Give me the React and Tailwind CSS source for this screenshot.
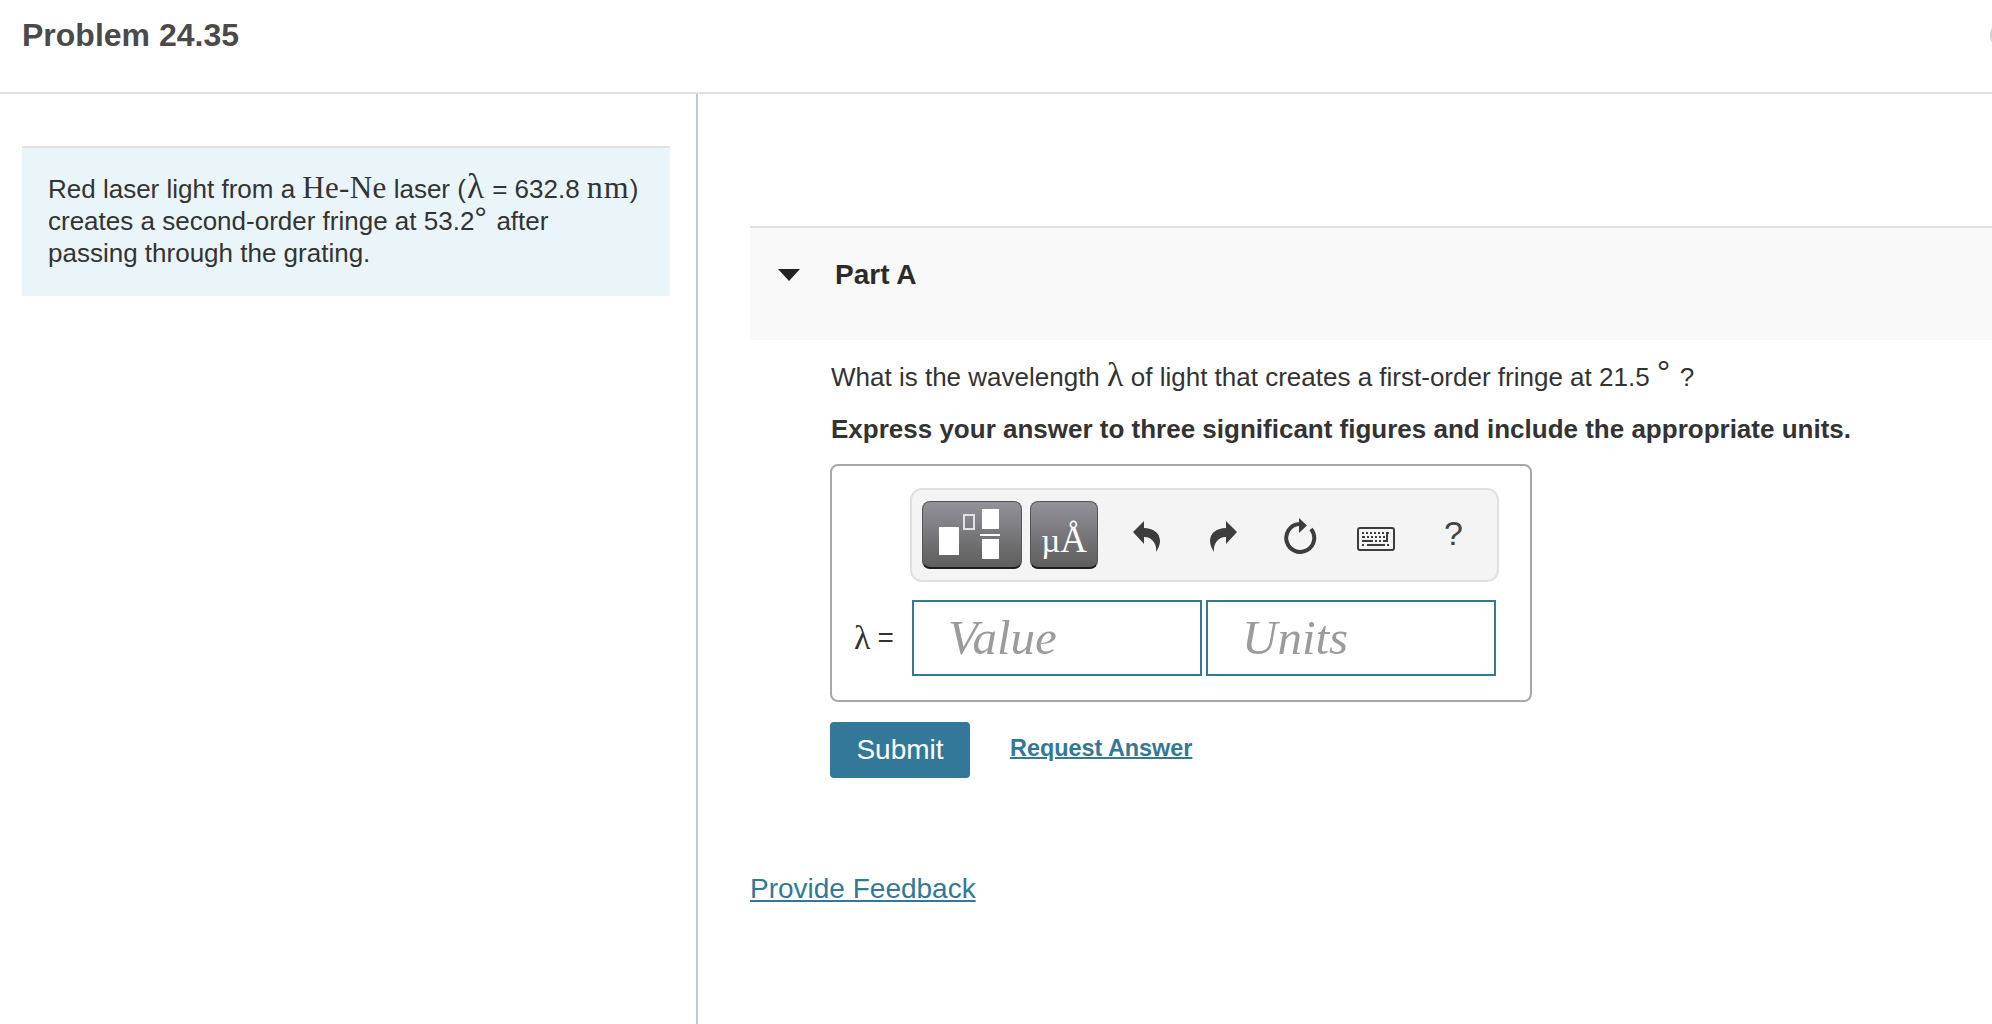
import React from 'react';

const SANS = "font-['Liberation_Sans',Arial,sans-serif]";
const MATH = "font-['Liberation_Serif','Times_New_Roman',serif]";

const ArrowIcon = ({ flip }) => (
  <svg width="27" height="31" viewBox="0 0 27 31" className={flip ? '-scale-x-100' : ''}>
    <path d="M0 11 L11 0 V7 C20 7 27 12 27 20 C27 24 25 28 23 31 C24 24 20 16 11 16 V23 Z" fill="#3d3d3d" />
  </svg>
);

const ReloadIcon = () => (
  <svg width="33" height="36" viewBox="0 0 33 36">
    <path d="M15 6 A14 14 0 1 0 27 11" fill="none" stroke="#3d3d3d" strokeWidth="4" />
    <path d="M15 0 L23 7.5 L15 15 Z" fill="#3d3d3d" />
  </svg>
);

const KeyboardIcon = () => (
  <svg width="38" height="24" viewBox="0 0 38 24">
    <rect x="1" y="1" width="36" height="22" rx="2" fill="none" stroke="#3d3d3d" strokeWidth="2" />
    <path d="M5 6h2M9 6h2M13 6h2M17 6h2M21 6h2M25 6h2M29 6h3M5 10h3M10 10h2M14 10h2M18 10h2M22 10h2M26 10h2M30 6v8M5 14h11M18 14h2M22 14h2M26 14h5M5 18h2M10 18h18M30 18h2" stroke="#3d3d3d" strokeWidth="2" fill="none" />
  </svg>
);

const TemplateIcon = () => (
  <svg width="96" height="66" viewBox="0 0 96 66">
    <rect x="15" y="25" width="20" height="28" fill="#fff" />
    <rect x="40" y="13" width="10" height="14" fill="none" stroke="#e2e2e2" strokeWidth="2" />
    <rect x="58" y="7" width="17" height="20" fill="#fff" />
    <rect x="56" y="32" width="20" height="2" fill="#fff" />
    <rect x="58" y="37" width="17" height="20" fill="#fff" />
  </svg>
);

const Toolbar = () => (
  <div className="ml-[78px] mt-[22px] w-[589px] h-[94px] rounded-xl border-2 border-[#e0e0e0] bg-[#f4f4f4] flex items-center pl-[10px]">
    <button className="w-[100px] h-[68px] rounded-lg border border-[#555] border-b-2 border-b-[#1c1c1c] bg-gradient-to-b from-[#92929a] to-[#5e5e5e] flex items-center justify-center">
      <TemplateIcon />
    </button>
    <button className={`ml-2 w-[68px] h-[68px] rounded-lg border border-[#555] border-b-2 border-b-[#1c1c1c] bg-gradient-to-b from-[#92929a] to-[#5e5e5e] text-white text-[37px] leading-none pt-[9px] ${MATH}`}>
      <span className="text-[33px]">µ</span>Å
    </button>
    <div className="ml-[35px] mt-[2px]"><ArrowIcon /></div>
    <div className="ml-[50px] mt-[2px]"><ArrowIcon flip /></div>
    <div className="ml-[47px] mt-[2px]"><ReloadIcon /></div>
    <div className="ml-[40px] mt-[8px]"><KeyboardIcon /></div>
    <div className="ml-[49px] text-[34px] leading-none text-[#444] -mt-[5px]">?</div>
  </div>
);

const AnswerBox = () => (
  <div className="ml-[80px] w-[702px] h-[238px] rounded-lg border-2 border-[#a8a8a8]">
    <Toolbar />
    <div className="mt-[18px] flex items-center h-[76px]">
      <div className="w-[80px] pl-[22px] flex items-center gap-[7px] text-[#333] whitespace-nowrap">
        <span className={`${MATH} text-[34px] leading-none`}>λ</span>
        <span className="text-[28px] leading-none">=</span>
      </div>
      <div className={`w-[290px] h-[76px] border-2 border-[#337995] pl-[34px] flex items-center text-[#9b9b9b] italic text-[49px] ${MATH}`}>Value</div>
      <div className={`ml-1 w-[290px] h-[76px] border-2 border-[#337995] pl-[34px] flex items-center text-[#9b9b9b] italic text-[49px] ${MATH}`}>Units</div>
    </div>
  </div>
);

export default function App() {
  return (
    <div className={`h-screen w-full overflow-hidden bg-white flex flex-col text-[#333] ${SANS}`}>
      <header className="h-[94px] shrink-0 border-b-2 border-[#e0e0e0] flex items-center justify-between pl-[22px] pb-[22px]">
        <h1 className="text-[32px] font-bold leading-none text-[#4a4a4a]">Problem 24.35</h1>
        <div className="w-[30px] h-[30px] -mr-[28px] rounded-full border-2 border-[#cfcfcf]" />
      </header>

      <div className="flex flex-1">
        <aside className="w-[698px] shrink-0 border-r-2 border-[#b9c9de] pl-[22px] pr-[26px] pt-[52px]">
          <div className="h-[150px] border-t-2 border-[#e0e0e0] bg-[#e9f5f8] pl-[26px] pt-[25px] text-[26px] leading-[32px] whitespace-nowrap">
            <div>
              Red laser light from a <span className={`${MATH} text-[31px] leading-[0] tracking-[0.3px]`}>He-Ne</span> laser (<span className={`${MATH} text-[35px] leading-[0] mx-[1px]`}>λ</span> = 632.8 <span className={`${MATH} text-[32px] leading-[0] tracking-[1px]`}>nm</span>)
            </div>
            <div>
              creates a second-order fringe at 53.2<span className="text-[32px] leading-[0] relative -top-[1px] mr-[2px]">°</span> after
            </div>
            <div>passing through the grating.</div>
          </div>
        </aside>

        <main className="flex-1 pl-[52px] pt-[132px]">
          <div className="h-[114px] border-t-2 border-[#e0e0e0] bg-[#f9f9f9] flex items-start pt-[31px]">
            <svg width="22" height="12" viewBox="0 0 22 12" className="ml-[28px] mt-[10px]">
              <path d="M0 0H22L11 12Z" fill="#222" />
            </svg>
            <h2 className="ml-[35px] text-[28px] leading-[32px] font-bold text-[#2b2b2b]">Part A</h2>
          </div>

          <p className="ml-[81px] mt-[21px] text-[26px] leading-[32px] whitespace-nowrap">
            What is the wavelength <span className={`${MATH} text-[34px] leading-[0]`}>λ</span> of light that creates a first-order fringe at 21.5 <span className="text-[34px] leading-[0] relative -top-[2px] mr-[2px]">°</span> ?
          </p>
          <p className="ml-[81px] mt-[20px] text-[26px] leading-[32px] font-bold whitespace-nowrap">
            Express your answer to three significant figures and include the appropriate units.
          </p>

          <div className="mt-[19px]">
            <AnswerBox />
          </div>

          <div className="ml-[80px] mt-[20px] flex items-start">
            <button className="w-[140px] h-[56px] rounded bg-[#337899] text-white text-[28px] leading-none">Submit</button>
            <a href="#" className="ml-[40px] mt-[12px] text-[23.4px] leading-[28px] font-bold text-[#337899] underline decoration-2">Request Answer</a>
          </div>

          <a href="#" className="block w-fit mt-[95px] text-[28px] leading-[32px] text-[#337899] underline">Provide Feedback</a>
        </main>
      </div>
    </div>
  );
}
